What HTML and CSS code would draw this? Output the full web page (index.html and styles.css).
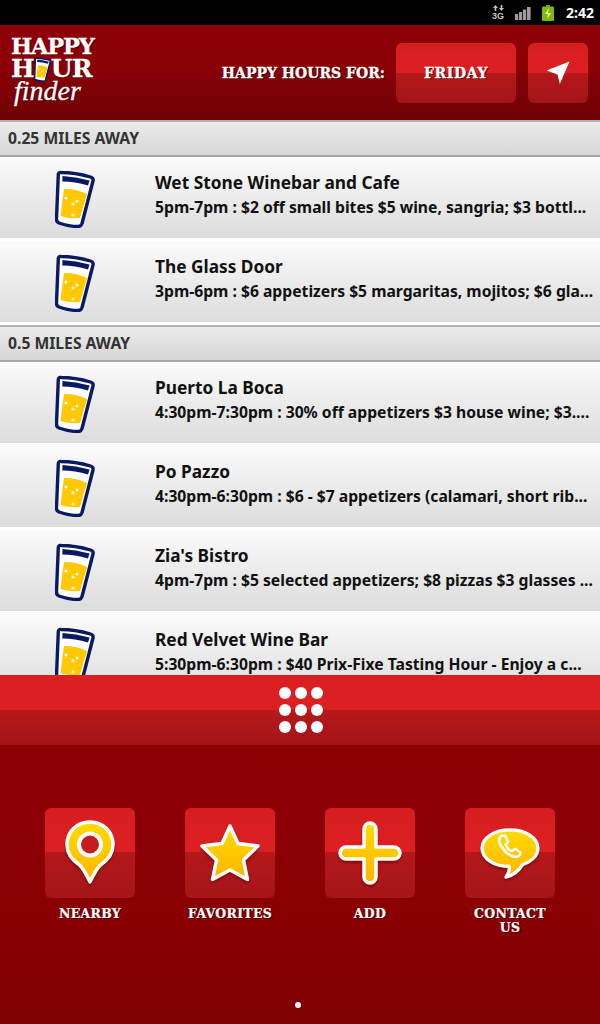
FILE: index.html
```html
<!DOCTYPE html>
<html lang="en">
<head>
<meta charset="utf-8">
<title>Happy Hour Finder</title>
<link rel="stylesheet" href="styles.css">
</head>
<body>
<svg class="defs" width="0" height="0" aria-hidden="true">
  <defs>
    <linearGradient id="gold" x1="0" y1="0" x2="0" y2="1">
      <stop offset="0" stop-color="#ffdc00"/>
      <stop offset="1" stop-color="#ffb400"/>
    </linearGradient>
    <symbol id="glass" viewBox="0 0 40 58">
      <path d="M6 2.500Q3.500 2 3.300 4.500L1.500 49Q1.300 52 4 53 14 56.500 23 56.500 26 56.500 27 53.500L38 11Q38.700 8 35.500 7 20 2.500 6 2.500Z" fill="#fff" stroke="#0a1a62" stroke-width="3.400" stroke-linejoin="round"/>
      <path d="M7.500 6Q21 6.500 34.500 10.500L33 15.500Q20 11.500 7.300 11.500Z" fill="#0a1a62"/>
      <path d="M9 19Q20 18.500 32 24L25 48Q15 49 5.500 46Z" fill="#ffc800"/>
      <circle cx="11" cy="28" r="1.500" fill="#fff"/><circle cx="22" cy="31" r="1.500" fill="#fff"/>
      <circle cx="18" cy="34" r="1.500" fill="#fff"/><circle cx="18" cy="45" r="1.500" fill="#fff"/>
    </symbol>
  </defs>
</svg>
<div class="app">
  <div class="status">
    <span class="net">
      <svg width="11" height="6" viewBox="0 0 11 6"><path d="M2.500 0 5 3H3.300V6H1.700V3H0ZM8.500 6 6 3H7.700V0H9.300V3H11Z" fill="#c4c4c4"/></svg>
      <span>3G</span>
    </span>
    <svg class="bars" width="16" height="14" viewBox="0 0 16 14"><path d="M0 8h3.200v6H0zM4 6h3.200v8H4zM8 3.500h3.200V14H8zM12 1h3.600v13H12z" fill="#9c9c9c"/></svg>
    <svg class="batt" width="12" height="16" viewBox="0 0 12 16"><path d="M4 0h4v2H4z" fill="#6a9a10"/><rect y="1.500" width="12" height="14.500" rx="1" fill="#7eb80e"/><path d="M7 3 3 9h3l-1 5 4-6H6z" fill="#e6f7a0"/></svg>
    <span class="clock">2:42</span>
  </div>

  <header class="top">
    <div class="logo">
      <div class="logo-line">HAPPY</div>
      <div class="logo-line logo-hour">H<svg class="logo-glass" width="17" height="25"><use href="#glass"/></svg>UR</div>
      <div class="logo-finder">finder</div>
    </div>
    <div class="for">HAPPY HOURS FOR:</div>
    <div class="btn btn-day">FRIDAY</div>
    <div class="btn btn-loc">
      <svg width="24" height="24" viewBox="0 0 24 24"><path d="M23.500 .500 .500 9.500 11.500 13.500 13.800 23Z" fill="#fff"/></svg>
    </div>
  </header>

  <main class="list">
    <div class="section">0.25 MILES AWAY</div>
    <div class="row"><svg class="glass" width="40" height="58"><use href="#glass"/></svg><div class="info"><div class="name">Wet Stone Winebar and Cafe</div><div class="desc">5pm-7pm : $2 off small bites $5 wine, sangria; $3 bottl...</div></div></div>
    <div class="row"><svg class="glass" width="40" height="58"><use href="#glass"/></svg><div class="info"><div class="name">The Glass Door</div><div class="desc">3pm-6pm : $6 appetizers $5 margaritas, mojitos; $6 gla...</div></div></div>
    <div class="section">0.5 MILES AWAY</div>
    <div class="row"><svg class="glass" width="40" height="58"><use href="#glass"/></svg><div class="info"><div class="name">Puerto La Boca</div><div class="desc">4:30pm-7:30pm : 30% off appetizers $3 house wine; $3....</div></div></div>
    <div class="row"><svg class="glass" width="40" height="58"><use href="#glass"/></svg><div class="info"><div class="name">Po Pazzo</div><div class="desc">4:30pm-6:30pm : $6 - $7 appetizers (calamari, short rib...</div></div></div>
    <div class="row"><svg class="glass" width="40" height="58"><use href="#glass"/></svg><div class="info"><div class="name">Zia's Bistro</div><div class="desc">4pm-7pm : $5 selected appetizers; $8 pizzas $3 glasses ...</div></div></div>
    <div class="row"><svg class="glass" width="40" height="58"><use href="#glass"/></svg><div class="info"><div class="name">Red Velvet Wine Bar</div><div class="desc">5:30pm-6:30pm : $40 Prix-Fixe Tasting Hour - Enjoy a c...</div></div></div>
  </main>

  <div class="handle">
    <div class="dots"><i></i><i></i><i></i><i></i><i></i><i></i><i></i><i></i><i></i></div>
  </div>

  <section class="drawer">
    <div class="tiles">
      <div class="tile-item">
        <div class="tile">
          <svg class="pin" width="56" height="68" viewBox="0 0 56 68"><path class="ico" d="M28 4C14.500 4 5 14 5 26.500 5 35.500 10 42 17.500 47 21 49.500 24.500 57 28 64 31.500 57 35 49.500 38.500 47 46 42 51 35.500 51 26.500 51 14 41.500 4 28 4Z"/><circle cx="28" cy="26.500" r="11" fill="#c41c1f" stroke="#fff" stroke-width="4"/></svg>
        </div>
        <div class="label">NEARBY</div>
      </div>
      <div class="tile-item">
        <div class="tile">
          <svg width="64" height="60" viewBox="0 0 64 60"><path class="ico" d="M32 3 40 20.500 60 23 45.500 37 49.500 56.500 32 47 14.500 56.500 18.500 37 4 23 24 20.500Z"/></svg>
        </div>
        <div class="label">FAVORITES</div>
      </div>
      <div class="tile-item">
        <div class="tile">
          <svg width="64" height="64" viewBox="0 0 64 64"><path class="ico" d="M26 8a6 6 0 0 1 12 0V26H56a6 6 0 0 1 0 12H38V56a6 6 0 0 1-12 0V38H8a6 6 0 0 1 0-12H26Z"/></svg>
        </div>
        <div class="label">ADD</div>
      </div>
      <div class="tile-item">
        <div class="tile">
          <svg width="60" height="52" viewBox="0 0 62 54"><path class="ico" d="M31 3C15 3 2 11 2 22 2 33 15 41 30 41 31 45 30 48 27 52 34 50 40 46 44 39 53 36 60 30 60 22 60 11 47 3 31 3Z"/><path d="M22 9C19 12 19 16 22 20 25 25 30 30 36 31 39 31.500 42 29 42 26.500L36.500 22.500 33 25C30 24 27.500 21 26.500 18L29 15.500 26 9Z" fill="none" stroke="#fff" stroke-width="2.600" stroke-linejoin="round"/></svg>
        </div>
        <div class="label">CONTACT US</div>
      </div>
    </div>
    <div class="page-dot"></div>
  </section>
</div>
</body>
</html>
```

FILE: styles.css
```css
* { box-sizing: border-box; }
html, body { margin: 0; padding: 0; }
body { width: 600px; height: 1024px; overflow: hidden; background: #000; }
.defs { position: absolute; }
.app { width: 600px; height: 1024px; display: flex; flex-direction: column; overflow: hidden; }

.status { height: 25px; flex: none; background: #000; display: flex; align-items: center; justify-content: flex-end; padding-right: 6px; }
.net { width: 12px; display: flex; flex-direction: column; align-items: center; gap: 1px; color: #c4c4c4; font: bold 9px/9px "Liberation Sans", sans-serif; margin-right: 11px; }
.bars { margin-right: 11px; }
.batt { margin-right: 12px; }
.clock { color: #fff; font: bold 14px/1 "Noto Sans", sans-serif; width: 28px; }

.top { height: 95px; flex: none; display: flex; align-items: center; padding: 0 12px; background: repeating-conic-gradient(rgba(0, 0, 0, .04) 0 25%, transparent 0 50%) 0 0 / 2px 2px, linear-gradient(#900107, #8e0106 40%, #700004); }
.logo { width: 83px; align-self: flex-start; margin-top: 11px; margin-left: -1px; color: #fff; font-family: "DejaVu Serif", serif; font-weight: bold; text-shadow: 1px 1px 0 #4a0003; -webkit-text-stroke: .3px #fff; }
.logo-line { font-size: 22.500px; line-height: 21px; letter-spacing: -1.200px; height: 21px; white-space: nowrap; }
.logo-hour { font-size: 25px; line-height: 24px; height: 24px; letter-spacing: -.8px; display: flex; align-items: center; }
.logo-glass { flex: none; }
.logo-finder { font: italic 28px/20px "Liberation Serif", serif; margin-left: 3px; }
.for { margin-left: auto; margin-right: 11px; color: #fff; font: bold 14px/1 "DejaVu Serif", serif; -webkit-text-stroke: .3px #fff; text-shadow: 1px 1px 0 #400002; white-space: nowrap; }
.btn { height: 60px; border-radius: 6px; display: flex; align-items: center; justify-content: center; background: repeating-conic-gradient(rgba(0, 0, 0, .02) 0 25%, transparent 0 50%) 0 0 / 2px 2px, linear-gradient(#d81e21, #df2023 50%, #b6181b 50%, #a61518 100%); color: #fff; }
.btn-day { width: 120px; font: bold 14px/1 "DejaVu Serif", serif; letter-spacing: .6px; -webkit-text-stroke: .3px #fff; text-shadow: 1px 1px 0 #5a0003; }
.btn-loc { width: 60px; margin-left: 12px; }

.list { height: 555px; flex: none; overflow: hidden; background: #fff; }
.section { height: 37px; padding: 1px 0 0 8px; display: flex; align-items: center; color: #333; font: bold 15.700px/1 "Noto Sans", sans-serif; background: repeating-conic-gradient(rgba(0, 0, 0, .03) 0 25%, transparent 0 50%) 0 0 / 2px 2px, linear-gradient(#efefef, #dadada); border-top: 2px solid #b2b2b2; border-bottom: 2px solid #a8a8a8; }
.row { height: 84px; padding-left: 55px; display: flex; align-items: center; background: linear-gradient(#fbfbfb, #f6f6f6 15%, #dcdcdc calc(100% - 3px), #fff calc(100% - 3px)); }
.glass { flex: none; margin-right: 60px; margin-bottom: 1px; }
.info { min-width: 0; margin-bottom: 8px; }
.name { color: #111; font: bold 17.300px/24px "Noto Sans", sans-serif; white-space: nowrap; }
.desc { color: #111; font: bold 15.700px/24px "Noto Sans", sans-serif; white-space: nowrap; }

.handle { height: 70px; flex: none; display: flex; align-items: center; justify-content: center; padding-left: 1px; background: repeating-conic-gradient(rgba(0, 0, 0, .02) 0 25%, transparent 0 50%) 0 0 / 2px 2px, linear-gradient(#db1f22, #df2023 50%, #b8181b 50%, #a61417 100%); }
.dots { display: grid; grid-template-columns: repeat(3, 12px); column-gap: 4px; row-gap: 5px; }
.dots i { width: 12px; height: 12px; border-radius: 50%; background: #fff; }

.drawer { flex: 1; display: flex; flex-direction: column; align-items: center; background: repeating-conic-gradient(rgba(0, 0, 0, .04) 0 25%, transparent 0 50%) 0 0 / 2px 2px, linear-gradient(#900106, #8d0004 60%, #810002); padding-top: 63px; }
.tiles { display: flex; gap: 50px; }
.tile-item { width: 90px; display: flex; flex-direction: column; align-items: center; }
.tile { width: 90px; height: 90px; border-radius: 6px; display: flex; align-items: center; justify-content: center; background: repeating-conic-gradient(rgba(0, 0, 0, .02) 0 25%, transparent 0 50%) 0 0 / 2px 2px, linear-gradient(#d81e21, #df2023 49%, #b6181b 49%, #a61518 100%); }
.tile svg { overflow: visible; }
.pin { margin-top: -2px; }
.ico { fill: url(#gold); stroke: #fff; stroke-width: 3.500; stroke-linejoin: round; filter: drop-shadow(0 2px 1px rgba(80, 0, 5, .5)); }
.label { margin-top: 9px; text-align: center; color: #fff; font: bold 12.500px/14px "DejaVu Serif", serif; letter-spacing: .3px; -webkit-text-stroke: .2px #fff; text-shadow: 1px 1px 0 #400002; width: 90px; }
.page-dot { width: 6px; height: 6px; border-radius: 50%; background: #fff; margin: auto 4px 16px 0; }
```
